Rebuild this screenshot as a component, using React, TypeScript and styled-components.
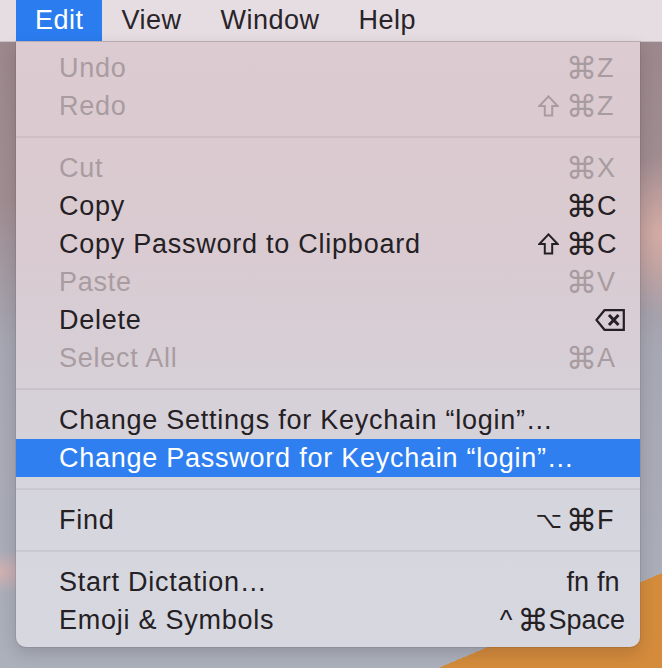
import React from 'react';
import styled, { createGlobalStyle } from 'styled-components';

const GlobalStyle = createGlobalStyle`
  html, body {
    margin: 0;
    padding: 0;
    height: 100%;
  }
  body {
    font-family: "Liberation Sans", "DejaVu Sans", sans-serif;
    -webkit-font-smoothing: antialiased;
  }
`;

const Desktop = styled.div`
  width: 100%;
  min-height: 100vh;
  display: flex;
  flex-direction: column;
  overflow: hidden;
  background:
    linear-gradient(157deg, transparent 90%, #d48b3c 90%),
    radial-gradient(ellipse 70px 80px at 100% 235px, rgba(216, 172, 164, 0.95), rgba(216, 172, 164, 0) 100%),
    radial-gradient(ellipse 40px 22px at 0% 572px, rgba(214, 176, 176, 0.9), rgba(214, 176, 176, 0) 100%),
    linear-gradient(180deg, #9a868b 0%, #a08d92 30%, #a6a7b3 52%, #abb0bb 100%);
`;

const MenuBar = styled.div`
  display: flex;
  height: 42px;
  box-sizing: border-box;
  padding-left: 16px;
  background: #e5dde2;
  border-bottom: 1px solid rgba(90, 70, 80, 0.18);
`;

const BarItem = styled.div<{ $active?: boolean }>`
  padding: 0 19px;
  line-height: 40px;
  font-size: 27px;
  letter-spacing: 0.5px;
  color: ${(p) => (p.$active ? '#ffffff' : '#29242a')};
  background: ${(p) => (p.$active ? '#2a7cef' : 'transparent')};
  &:first-child {
    padding-right: 18px;
  }
  & + & {
    padding-left: 20px;
  }
`;

const Menu = styled.div`
  margin-left: 16px;
  width: 624px;
  box-sizing: border-box;
  padding: 7px 0 8px;
  border-radius: 0 0 10px 10px;
  background: linear-gradient(180deg, #dccbd0 0%, #d9cbd1 35%, #d6d1d9 62%, #d5d6de 80%, #d7d8df 100%);
  box-shadow: 0 0 0 1px rgba(60, 40, 50, 0.1), 0 6px 16px rgba(40, 30, 40, 0.18);
`;

const Row = styled.div<{ $disabled?: boolean; $active?: boolean }>`
  display: flex;
  align-items: center;
  justify-content: space-between;
  height: 38px;
  padding: 0 15px 0 43px;
  font-size: 27px;
  letter-spacing: 0.75px;
  color: ${(p) => (p.$active ? '#ffffff' : p.$disabled ? '#a99ca1' : '#242024')};
  background: ${(p) => (p.$active ? '#2f7ff1' : 'transparent')};
  white-space: nowrap;
`;

const Separator = styled.div`
  height: 24px;
  display: flex;
  align-items: center;
  &::after {
    content: '';
    flex: 1;
    height: 2px;
    background: rgba(70, 50, 60, 0.08);
  }
`;

const Shortcut = styled.div`
  display: flex;
  align-items: center;
`;

const Mod = styled.span<{ $size: number; $gap: number; $font?: string }>`
  display: inline-flex;
  align-items: center;
  line-height: 1;
  margin-right: ${(p) => p.$gap}px;
  font-family: ${(p) => p.$font || 'inherit'};
  font-size: ${(p) => p.$size}px;
  letter-spacing: 0;
`;

const Key = styled.span`
  display: inline-flex;
  align-items: center;
  min-width: 28px;
  letter-spacing: 0;
`;

const ShiftIcon = () => (
  <svg width="21" height="22" viewBox="0 0 21 22">
    <path d="M10.5 1.4 L19.6 11 H14.2 V20.6 H6.8 V11 H1.4 Z" fill="none" stroke="currentColor" strokeWidth="2" strokeLinejoin="miter" />
  </svg>
);

const DeleteIcon = () => (
  <svg width="30" height="22" viewBox="0 0 30 22">
    <path d="M1.5 11 L9.5 1.2 H28.8 V20.8 H9.5 Z" fill="none" stroke="currentColor" strokeWidth="2.2" strokeLinejoin="miter" />
    <path d="M14 6 L23.5 16 M23.5 6 L14 16" stroke="currentColor" strokeWidth="3" />
  </svg>
);

type Entry =
  | 'sep'
  | {
      label: string;
      mods?: string[];
      key?: React.ReactNode;
      disabled?: boolean;
      active?: boolean;
    };

const items: Entry[] = [
  { label: 'Undo', mods: ['⌘'], key: 'Z', disabled: true },
  { label: 'Redo', mods: ['⇧', '⌘'], key: 'Z', disabled: true },
  'sep',
  { label: 'Cut', mods: ['⌘'], key: 'X', disabled: true },
  { label: 'Copy', mods: ['⌘'], key: 'C' },
  { label: 'Copy Password to Clipboard', mods: ['⇧', '⌘'], key: 'C' },
  { label: 'Paste', mods: ['⌘'], key: 'V', disabled: true },
  { label: 'Delete', key: <DeleteIcon /> },
  { label: 'Select All', mods: ['⌘'], key: 'A', disabled: true },
  'sep',
  { label: 'Change Settings for Keychain “login”…' },
  { label: 'Change Password for Keychain “login”…', active: true },
  'sep',
  { label: 'Find', mods: ['⌥', '⌘'], key: 'F' },
  'sep',
  { label: 'Start Dictation…', mods: ['fn'], key: 'fn' },
  { label: 'Emoji & Symbols', mods: ['^', '⌘'], key: 'Space' },
];

const sym = '"DejaVu Sans", sans-serif';

const renderMod = (m: string, i: number) => {
  switch (m) {
    case '⇧':
      return (
        <Mod key={i} $size={27} $gap={7}>
          <ShiftIcon />
        </Mod>
      );
    case '⌘':
      return (
        <Mod key={i} $size={31} $gap={0} $font={sym}>
          ⌘
        </Mod>
      );
    case '⌥':
      return (
        <Mod key={i} $size={23} $gap={4} $font={sym}>
          ⌥
        </Mod>
      );
    case '^':
      return (
        <Mod key={i} $size={27} $gap={5}>
          ^
        </Mod>
      );
    default:
      return (
        <Mod key={i} $size={27} $gap={8}>
          {m}
        </Mod>
      );
  }
};

const App = () => {
  return (
    <Desktop>
      <GlobalStyle />
      <MenuBar>
        <BarItem $active>Edit</BarItem>
        <BarItem>View</BarItem>
        <BarItem>Window</BarItem>
        <BarItem>Help</BarItem>
      </MenuBar>
      <Menu>
        {items.map((it, i) =>
          it === 'sep' ? (
            <Separator key={i} />
          ) : (
            <Row key={i} $disabled={it.disabled} $active={it.active}>
              <span>{it.label}</span>
              {it.key && (
                <Shortcut>
                  {(it.mods || []).map(renderMod)}
                  <Key>{it.key}</Key>
                </Shortcut>
              )}
            </Row>
          )
        )}
      </Menu>
    </Desktop>
  );
};

export default App;
